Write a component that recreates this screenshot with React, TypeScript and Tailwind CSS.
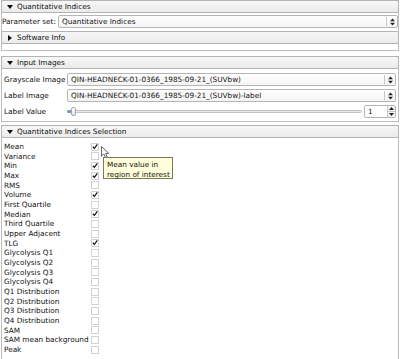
import React from "react";

const font = { fontFamily: '"DejaVu Sans", Verdana, sans-serif' };

function Header({ label, open }: { label: string; open: boolean }) {
  return (
    <div className="-mx-px flex h-[13px] items-center rounded-[2px] border border-[#b3b3b3] bg-gradient-to-b from-[#f7f7f7] to-[#ebebeb] pl-[4px]">
      {open ? (
        <svg width="6" height="4" viewBox="0 0 6 4" className="mr-[4px] ml-[1px]">
          <polygon points="0,0 6,0 3,4" fill="#111" />
        </svg>
      ) : (
        <svg width="4" height="6" viewBox="0 0 4 6" className="mr-[5px] ml-[2px]">
          <polygon points="0,0 4,3 0,6" fill="#111" />
        </svg>
      )}
      <span className="text-[7.3px] leading-none text-[#111]">{label}</span>
    </div>
  );
}

function UpDown() {
  return (
    <svg width="5" height="8" viewBox="0 0 5 8">
      <polygon points="0,3.3 2.5,0.6 5,3.3" fill="#222" />
      <polygon points="0,4.7 2.5,7.4 5,4.7" fill="#222" />
    </svg>
  );
}

function Combo({ text, className }: { text: string; className?: string }) {
  return (
    <div
      className={`flex h-[13px] items-center rounded-[2px] border border-[#b5b5b5] bg-gradient-to-b from-[#ffffff] to-[#f4f4f4] ${className ?? ""}`}
    >
      <span className="flex-1 pl-[3px] text-[7.3px] leading-none text-[#111]">{text}</span>
      <div className="h-[9px] w-px bg-[#c8c8c8]" />
      <div className="flex w-[10px] items-center justify-center">
        <UpDown />
      </div>
    </div>
  );
}

function Check({ checked }: { checked: boolean }) {
  return (
    <div className="flex h-[8px] w-[8px] items-center justify-center border border-[#d2d2d2] bg-white">
      {checked && (
        <svg width="7" height="7" viewBox="0 0 7 7" className="-mt-px">
          <path d="M1 3.8 L2.8 5.6 L6.2 1" stroke="#111" strokeWidth="1.4" fill="none" />
        </svg>
      )}
    </div>
  );
}

const rows: [string, boolean][] = [
  ["Mean", true],
  ["Variance", false],
  ["Min", true],
  ["Max", true],
  ["RMS", false],
  ["Volume", true],
  ["First Quartile", false],
  ["Median", true],
  ["Third Quartile", false],
  ["Upper Adjacent", false],
  ["TLG", true],
  ["Glycolysis Q1", false],
  ["Glycolysis Q2", false],
  ["Glycolysis Q3", false],
  ["Glycolysis Q4", false],
  ["Q1 Distribution", false],
  ["Q2 Distribution", false],
  ["Q3 Distribution", false],
  ["Q4 Distribution", false],
  ["SAM", false],
  ["SAM mean background", false],
  ["Peak", false],
];

export default function App() {
  return (
    <div className="relative h-[359px] w-[400px] overflow-hidden bg-white text-[#111]" style={font}>
      {/* Frame 1 */}
      <div className="ml-px mr-px h-[51px] border-x border-b border-[#bdbdbd]">
        <Header label="Quantitative Indices" open />
        <div className="mt-[2px] flex items-center">
          <span className="w-[56px] text-[7.3px] leading-none">Parameter set:</span>
          <Combo text="Quantitative Indices" className="flex-1" />
        </div>
        <div className="mt-[3px]">
          <Header label="Software Info" open={false} />
        </div>
      </div>

      {/* Frame 2 */}
      <div className="ml-px mr-px mt-[5px] h-[66px] border-x border-b border-[#bdbdbd]">
        <Header label="Input Images" open />
        <div className="mt-[4px] flex items-center pr-[2px]">
          <span className="w-[65px] pl-[2px] text-[7.3px] leading-none">Grayscale Image</span>
          <Combo text="QIN-HEADNECK-01-0366_1985-09-21_(SUVbw)" className="flex-1" />
        </div>
        <div className="mt-[3px] flex items-center pr-[2px]">
          <span className="w-[65px] pl-[2px] text-[7.3px] leading-none">Label Image</span>
          <Combo text="QIN-HEADNECK-01-0366_1985-09-21_(SUVbw)-label" className="flex-1" />
        </div>
        <div className="mt-[3px] flex h-[13px] items-center pr-[2px]">
          <span className="w-[65px] pl-[2px] text-[7.3px] leading-none">Label Value</span>
          <div className="relative flex h-[13px] flex-1 items-center">
            <div className="h-[3px] w-full rounded-full border border-[#c4c4c4] bg-[#e6e6e6]" />
            <div className="absolute left-0 top-[5px] h-[3px] w-[5px] rounded-l-full bg-[#6d9ad4]" />
            <div className="absolute left-[4px] top-[2px] h-[9px] w-[5px] rounded-[2px] border border-[#a8a8a8] bg-gradient-to-b from-white to-[#e4e4e4]" />
          </div>
          <div className="ml-[2px] flex h-[13px] w-[32px] items-stretch rounded-[2px] border border-[#b5b5b5] bg-white">
            <span className="flex flex-1 items-center pl-[3px] text-[7.3px] leading-none">1</span>
            <div className="flex w-[8px] flex-col border-l border-[#c8c8c8] bg-[#f3f3f3]">
              <div className="flex flex-1 items-center justify-center border-b border-[#c8c8c8]">
                <svg width="5" height="3" viewBox="0 0 5 3">
                  <polygon points="0,3 2.5,0 5,3" fill="#222" />
                </svg>
              </div>
              <div className="flex flex-1 items-center justify-center">
                <svg width="5" height="3" viewBox="0 0 5 3">
                  <polygon points="0,0 2.5,3 5,0" fill="#222" />
                </svg>
              </div>
            </div>
          </div>
        </div>
      </div>

      {/* Frame 3 */}
      <div className="ml-px mr-px mt-[3px] h-[240px] border-x border-[#bdbdbd]">
        <Header label="Quantitative Indices Selection" open />
        <div className="mt-[4px]">
          {rows.map(([label, checked]) => (
            <div key={label} className="flex h-[9.67px] items-center">
              <span className="w-[89px] pl-[2px] text-[7.3px] leading-none">{label}</span>
              <Check checked={checked} />
            </div>
          ))}
        </div>
      </div>

      {/* Cursor */}
      <svg className="absolute left-[101px] top-[146px]" width="9" height="13" viewBox="0 0 9 13">
        <path
          d="M0.5 0.5 L0.5 10.2 L2.9 8 L4.6 11.8 L6.2 11.1 L4.6 7.4 L7.8 7.4 Z"
          fill="#fff"
          stroke="#555"
          strokeWidth="0.9"
          strokeLinejoin="round"
        />
      </svg>

      {/* Tooltip */}
      <div className="absolute left-[103px] top-[157px] h-[22px] w-[70px] border border-[#7a7a5a] bg-[#ffffdc] pl-[3px] pt-[2px]">
        <div className="text-[7.3px] leading-[9.5px] text-[#111]">Mean value in</div>
        <div className="text-[7.3px] leading-[9.5px] text-[#111]">region of interest</div>
      </div>
    </div>
  );
}
